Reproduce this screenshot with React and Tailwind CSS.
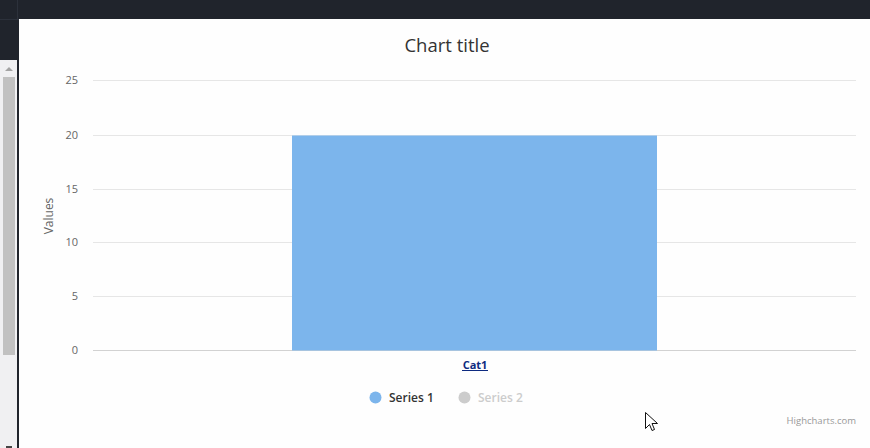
import React from 'react';

const ticks = [
  { v: 25, y: 80 },
  { v: 20, y: 135 },
  { v: 15, y: 189 },
  { v: 10, y: 242 },
  { v: 5, y: 296 },
  { v: 0, y: 350 },
];

const font = "'Open Sans', 'Liberation Sans', sans-serif";

const Chart = () => (
  <svg
    className="block w-full h-full"
    viewBox="19 19 851 429"
    style={{ fontFamily: font }}
  >
    <rect x="19" y="19" width="851" height="429" fill="#fefefe" />

    {/* title */}
    <text x="447" y="52" textAnchor="middle" fontSize="18.5" fill="#333333">
      Chart title
    </text>

    {/* grid + y labels */}
    {ticks.map((t) => (
      <g key={t.v}>
        <line
          x1="93"
          x2="856"
          y1={t.y + 0.5}
          y2={t.y + 0.5}
          stroke={t.v === 0 ? '#d2d2d2' : '#e6e6e6'}
          strokeWidth="1"
        />
        <text x="78" y={t.y + 4} textAnchor="end" fontSize="11" fill="#666666">
          {t.v}
        </text>
      </g>
    ))}

    <text
      x="0"
      y="0"
      fontSize="12"
      fill="#666666"
      textAnchor="middle"
      transform="translate(53 216) rotate(-90)"
    >
      Values
    </text>

    {/* bar */}
    <rect x="292" y="135.5" width="365" height="215" fill="#7cb5ec" />

    {/* category */}
    <text x="475" y="369" textAnchor="middle" fontSize="11" fontWeight="700" fill="#0d2a80">
      Cat1
    </text>
    <line x1="462" x2="488" y1="370.5" y2="370.5" stroke="#0d2a80" strokeWidth="1" />

    {/* legend */}
    <circle cx="375.5" cy="397.5" r="6" fill="#7cb5ec" />
    <text x="389" y="401.5" fontSize="12" fontWeight="600" fill="#333333">
      Series 1
    </text>
    <circle cx="464.5" cy="397.5" r="6" fill="#cccccc" />
    <text x="478" y="401.5" fontSize="12" fontWeight="600" fill="#cccccc">
      Series 2
    </text>

    {/* credits */}
    <text x="856" y="424" textAnchor="end" fontSize="9.5" fill="#999999">
      Highcharts.com
    </text>

    {/* mouse pointer */}
    <path
      d="M645.5 412.5 L645.5 428.5 L649.5 424.5 L652 430.5 L654.5 429.5 L652 423.5 L657.5 423.5 Z"
      fill="#ffffff"
      stroke="#111111"
      strokeWidth="1"
      strokeLinejoin="miter"
    />
  </svg>
);

const App = () => {
  return (
    <div className="w-[870px] h-[448px] flex flex-col bg-[#20242c] overflow-hidden">
      {/* top bar */}
      <div className="h-[19px] flex shrink-0">
        <div className="w-[18px] border-r border-[#2c313b]" />
        <div className="flex-1" />
      </div>

      <div className="flex flex-1 min-h-0">
        {/* left strip with scrollbar */}
        <div className="w-[19px] flex flex-col shrink-0">
          <div className="h-[41px] border-t border-[#2c313b]" />
          <div className="flex-1 flex">
            <div className="w-[17px] bg-[#f0f0f2] flex flex-col items-center pl-[1px]">
              <div className="h-[17px] w-full flex items-center justify-center">
                <div className="w-0 h-0 border-l-[4px] border-r-[4px] border-b-[4px] border-l-transparent border-r-transparent border-b-[#a3a3a3]" />
              </div>
              <div className="w-[12px] h-[278px] bg-[#c1c1c1]" />
              <div className="flex-1" />
              <div className="w-[6px] h-[2px] bg-[#444]" />
            </div>
            <div className="flex-1 bg-[#20242c]" />
          </div>
        </div>

        {/* chart */}
        <div className="flex-1 bg-white">
          <Chart />
        </div>
      </div>
    </div>
  );
};

export default App;
